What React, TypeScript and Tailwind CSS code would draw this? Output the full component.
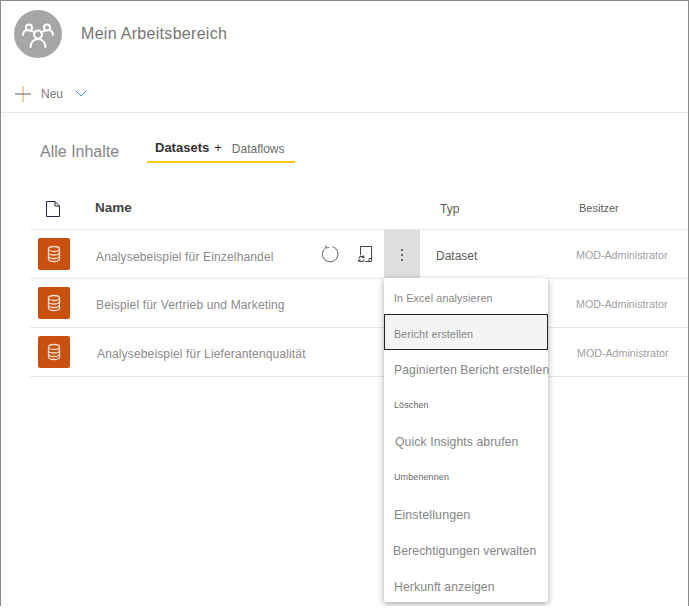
const ROWS = [
  { name: 'Analysebeispiel für Einzelhandel', nameClass: 'pl-0', ownerClass: 'pl-0' },
  { name: 'Beispiel für Vertrieb und Marketing', nameClass: 'pl-0', ownerClass: 'pl-0' },
  { name: 'Analysebeispiel für Lieferantenqualität', nameClass: 'pl-px', ownerClass: 'pl-px' },
];

const MENU = [
  { label: 'In Excel analysieren', className: 'text-[10.800px] text-[#858585] pl-[10px] pt-[5px]' },
  { label: 'Bericht erstellen', className: 'text-[10.800px] text-[#858585] pl-[10px] pt-[5px] bg-[#f4f4f4] outline outline-1 -outline-offset-1 outline-[#222]' },
  { label: 'Paginierten Bericht erstellen', className: 'text-[12.200px] text-[#858585] pl-[10px] pt-[5px]' },
  { label: 'Löschen', className: 'text-[9px] text-[#666] pl-[10px] pt-[3px]' },
  { label: 'Quick Insights abrufen', className: 'text-[12.200px] text-[#858585] pl-[11px] pt-[5px]' },
  { label: 'Umbenennen', className: 'text-[9px] text-[#666] pl-[10px] pt-[3px]' },
  { label: 'Einstellungen', className: 'text-[12.500px] text-[#858585] pl-[10px] pt-[7px]' },
  { label: 'Berechtigungen verwalten', className: 'text-[12.200px] text-[#858585] pl-[9px] pt-[7px]' },
  { label: 'Herkunft anzeigen', className: 'text-[12.200px] text-[#858585] pl-[10px] pt-[7px]' },
];

function WorkspaceIcon() {
  return (
    <svg viewBox="0 0 48 48" className="w-12 h-12" fill="none" stroke="#fff" strokeWidth="2" strokeLinecap="round">
      <circle cx="15" cy="17.5" r="3" />
      <circle cx="33" cy="17.5" r="3" />
      <circle cx="24" cy="24.5" r="4" stroke="#fff" />
      <path d="M9 25c0-3 2-4.500 4-5M39 25c0-3-2-4.500-4-5" />
      <path d="M17 21c1.500 0 3 .6 4 1.500M31 21c-1.500 0-3 .6-4 1.500" />
      <path d="M16.500 37c0-4.500 3-8 7.500-8s7.500 3.500 7.500 8" />
    </svg>
  );
}

function DatasetIcon() {
  return (
    <svg viewBox="0 0 32 32" className="w-8 h-8" fill="none" stroke="#f7dccb" strokeWidth="1.300">
      <ellipse cx="16" cy="11" rx="5.500" ry="2.500" />
      <path d="M10.500 11v10c0 1.400 2.500 2.500 5.500 2.500s5.500-1.100 5.500-2.500V11" />
      <path d="M10.500 14.500c0 1.400 2.500 2.500 5.500 2.500s5.500-1.100 5.500-2.500" />
      <path d="M10.500 18c0 1.400 2.500 2.500 5.500 2.500s5.500-1.100 5.500-2.500" />
    </svg>
  );
}

function RefreshIcon() {
  return (
    <svg viewBox="0 0 18 18" className="w-[18px] h-[18px]" fill="none" stroke="#605e5c" strokeWidth="1">
      <path d="M11.500 1.600A7.800 7.800 0 1 1 5 2.500" />
      <path d="M4.500 0.500 5.500 3 8 2.500" />
    </svg>
  );
}

function ReportIcon() {
  return (
    <svg viewBox="0 0 16 16" className="w-4 h-4" fill="none" stroke="#444" strokeWidth="1">
      <path d="M2.500 9V0.500H13.500V15.500H7" />
      <path d="M11 15.500V12.500H13.500" />
      <path d="M1 12.500a2.700 2.700 0 0 1 4.500-1.500M6 13.500a2.700 2.700 0 0 1-4.500 1.500" strokeWidth="1.200" />
      <path d="M5.700 9.500v2H3.700M0.800 16v-2h2" strokeWidth="1.200" />
    </svg>
  );
}

function Row({ name, nameClass, ownerClass, active }: { name: string; nameClass: string; ownerClass: string; active?: boolean }) {
  return (
    <div className="flex h-[49px] border-b border-[#e8e8e8]">
      <div className="w-[66px] shrink-0 pl-2 pt-2">
        <div className="w-8 h-8 rounded-[2px] bg-[#ca5010]">
          <DatasetIcon />
        </div>
      </div>
      <div className={`w-[288px] shrink-0 flex items-center text-[12px] tracking-[0.15px] text-[#8a8a8a] ${nameClass}`}>
        <span className={active ? 'pt-[5px]' : 'pt-[3px]'}>{name}</span>
        {active && (
          <div className="ml-auto flex items-center gap-[19px] pr-[10px]">
            <RefreshIcon />
            <ReportIcon />
          </div>
        )}
      </div>
      <div className={`w-9 shrink-0 flex items-center justify-center ${active ? 'bg-[#e1dfdd]' : ''}`}>
        {active && (
          <div className="flex flex-col gap-[3px] pt-[1px]">
            <span className="w-[2px] h-[2px] bg-[#666]" />
            <span className="w-[2px] h-[2px] bg-[#666]" />
            <span className="w-[2px] h-[2px] bg-[#666]" />
          </div>
        )}
      </div>
      <div className="w-[156px] shrink-0 flex items-center pl-4 pt-[3px] text-[12px] text-[#605e5c]">{active ? 'Dataset' : ''}</div>
      <div className={`flex-1 flex items-center pt-[3px] text-[10.700px] whitespace-nowrap text-[#a0a0a0] ${ownerClass}`}>MOD-Administrator</div>
    </div>
  );
}

export default function App() {
  return (
    <div className="w-[689px] h-[614px] bg-white font-['Liberation_Sans',sans-serif]">
      <div className="relative h-[606px] border-x border-t border-[#8a8a8a] overflow-hidden">
        <header className="flex items-center h-[57px] pt-[9px] pl-[13px]">
          <div className="w-12 h-12 rounded-full bg-[#a6a6a6]">
            <WorkspaceIcon />
          </div>
          <h1 className="ml-[19px] text-[16px] font-normal text-[#757575] tracking-[0.3px]">Mein Arbeitsbereich</h1>
        </header>

        <div className="flex items-center h-[55px] border-b border-[#e8e8e8] pl-[14px] pt-[17px]">
          <svg viewBox="0 0 16 16" className="w-4 h-4" fill="none" strokeWidth="1">
            <path d="M8 0v16" stroke="#d9a25c" />
            <path d="M0 8h16" stroke="#605e5c" />
          </svg>
          <span className="ml-[10px] text-[12px] text-[#7a7a7a]">Neu</span>
          <svg viewBox="0 0 12 7" className="ml-[12px] w-3 h-[7px]" fill="none" stroke="#4a90d0" strokeWidth="1">
            <path d="M0.500 0.500 6 6l5.500-5.500" />
          </svg>
        </div>

        <div className="flex items-end h-[50px] pl-[39px]">
          <span className="-mb-px text-[16px] text-[#858585] w-[107px]">Alle Inhalte</span>
          <div className="flex items-center w-[148px] h-[33px] pl-2 border-b-2 border-[#f2c811]">
            <span className="pt-[4px] text-[13px] font-bold text-[#333]">Datasets</span>
            <span className="ml-[5px] pt-[4px] text-[13px] text-[#252423]">+</span>
            <span className="ml-[10px] pt-[7px] text-[12px] text-[#6b6b6b]">Dataflows</span>
          </div>
        </div>

        <div className="ml-[29px] mt-[28px]">
          <div className="flex h-[39px] border-b border-[#e8e8e8]">
            <div className="w-[66px] shrink-0 pl-[16px] pt-[10px]">
              <svg viewBox="0 0 14 16" className="w-[14px] h-4" fill="none" stroke="#2b2540" strokeWidth="1">
                <path d="M0.500 0.500H9L13.500 5V15.500H0.500Z" />
                <path d="M9 0.500V5H13.500" />
              </svg>
            </div>
            <div className="w-[344px] shrink-0 -ml-px mr-px text-[13.500px] font-bold text-[#444] pt-[7px]">Name</div>
            <div className="w-[139px] shrink-0 text-[12px] text-[#605e5c] pt-[9px]">Typ</div>
            <div className="text-[11px] text-[#605e5c] pt-[9px]">Besitzer</div>
          </div>
          {ROWS.map((row, i) => (
            <Row key={row.name} {...row} active={i === 0} />
          ))}
        </div>

        <div className="absolute left-[383px] top-[277px] w-[164px] rounded-[2px] bg-white shadow-[0_2px_6px_rgba(0,0,0,0.35)]">
          {MENU.map((item) => (
            <div key={item.label} className={`h-9 flex items-center whitespace-nowrap tracking-[0.1px] ${item.className}`}>
              {item.label}
            </div>
          ))}
        </div>
      </div>
    </div>
  );
}
